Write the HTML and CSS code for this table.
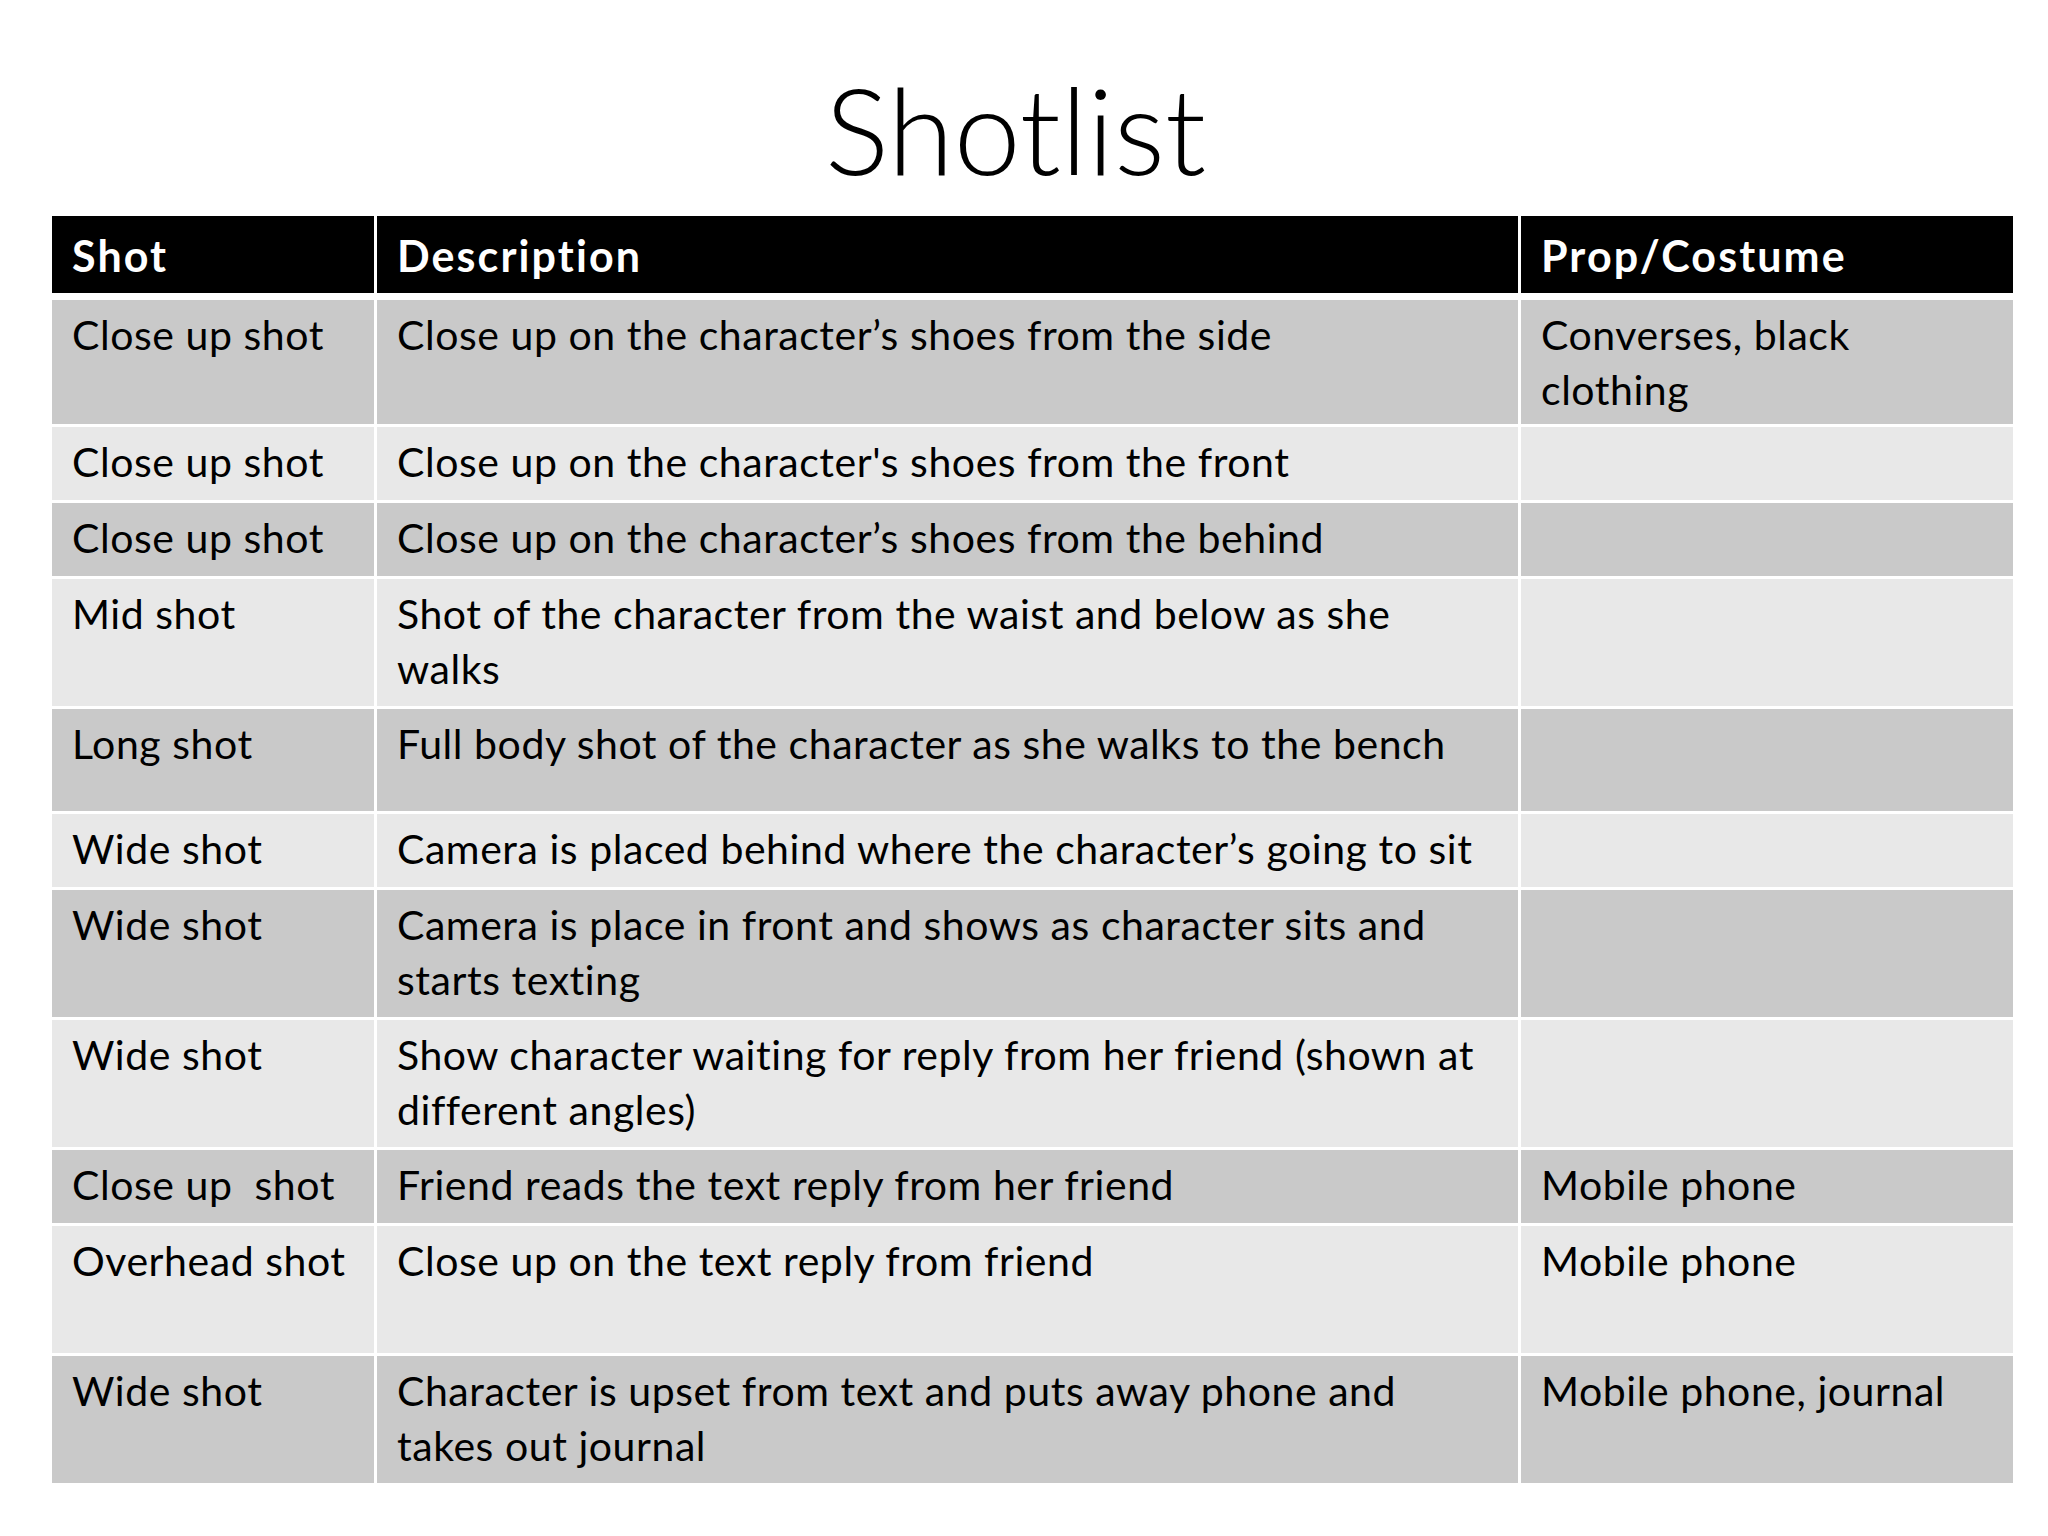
FILE: index.html
```html
<!DOCTYPE html>
<html lang="en">
<head>
<meta charset="utf-8">
<title>Shotlist</title>
<link rel="stylesheet" href="styles.css">
</head>
<body>
<div class="slide">
  <h1 class="title">Shotlist</h1>
  <div class="table">
    <div class="row head">
      <div class="cell">Shot</div>
      <div class="cell">Description</div>
      <div class="cell">Prop/Costume</div>
    </div>
    <div class="row dark h-first">
      <div class="cell">Close up shot</div>
      <div class="cell">Close up on the character’s shoes from the side</div>
      <div class="cell">Converses, black clothing</div>
    </div>
    <div class="row light h-one">
      <div class="cell">Close up shot</div>
      <div class="cell">Close up on the character's shoes from the front</div>
      <div class="cell"></div>
    </div>
    <div class="row dark h-one">
      <div class="cell">Close up shot</div>
      <div class="cell">Close up on the character’s shoes from the behind</div>
      <div class="cell"></div>
    </div>
    <div class="row light h-two">
      <div class="cell">Mid shot</div>
      <div class="cell">Shot of the character from the waist and below as she walks</div>
      <div class="cell"></div>
    </div>
    <div class="row dark h-mid">
      <div class="cell">Long shot</div>
      <div class="cell">Full body shot of the character as she walks to the bench</div>
      <div class="cell"></div>
    </div>
    <div class="row light h-one">
      <div class="cell">Wide shot</div>
      <div class="cell">Camera is placed behind where the character’s going to sit</div>
      <div class="cell"></div>
    </div>
    <div class="row dark h-two">
      <div class="cell">Wide shot</div>
      <div class="cell">Camera is place in front and shows as character sits and starts texting</div>
      <div class="cell"></div>
    </div>
    <div class="row light h-two">
      <div class="cell">Wide shot</div>
      <div class="cell">Show character waiting for reply from her friend (shown at different angles)</div>
      <div class="cell"></div>
    </div>
    <div class="row dark h-one">
      <div class="cell">Close up&nbsp; shot</div>
      <div class="cell">Friend reads the text reply from her friend</div>
      <div class="cell">Mobile phone</div>
    </div>
    <div class="row light h-two">
      <div class="cell">Overhead shot</div>
      <div class="cell">Close up on the text reply from friend</div>
      <div class="cell">Mobile phone</div>
    </div>
    <div class="row dark h-two">
      <div class="cell">Wide shot</div>
      <div class="cell">Character is upset from text and puts away phone and takes out journal</div>
      <div class="cell">Mobile phone, journal</div>
    </div>
  </div>
</div>
</body>
</html>
```

FILE: styles.css
```css
html, body {
  margin: 0;
  padding: 0;
  background: #ffffff;
}

body {
  width: 2048px;
  height: 1536px;
  overflow: hidden;
  font-family: Lato, "Liberation Sans", sans-serif;
  color: #000000;
}

.slide {
  padding: 62px 0 0 52px;
}

.title {
  margin: 0;
  width: 1961px;
  padding-right: 34px;
  box-sizing: border-box;
  text-align: center;
  font-family: Lato, "Liberation Sans", sans-serif;
  font-weight: 300;
  font-size: 120px;
  line-height: 134px;
  height: 154px;
}

.table {
  display: flex;
  flex-direction: column;
  gap: 3px;
  width: 1961px;
}

.row {
  display: grid;
  grid-template-columns: 322px 1141px 492px;
  column-gap: 3px;
}

.cell {
  padding: 7px 20px 0 20px;
  font-size: 41px;
  line-height: 55px;
  letter-spacing: 0.55px;
  box-sizing: border-box;
}

.head {
  height: 77px;
  margin-bottom: 4px;
}

.head .cell {
  background: #000000;
  color: #ffffff;
  font-weight: 700;
  font-size: 43px;
  letter-spacing: 2.1px;
  padding-top: 12px;
}

.dark .cell {
  background: #c9c9c9;
}

.light .cell {
  background: #e8e8e8;
}

.h-first {
  height: 124px;
}

.h-one {
  height: 73px;
}

.h-two {
  height: 127px;
}

.h-mid {
  height: 102px;
}
```
